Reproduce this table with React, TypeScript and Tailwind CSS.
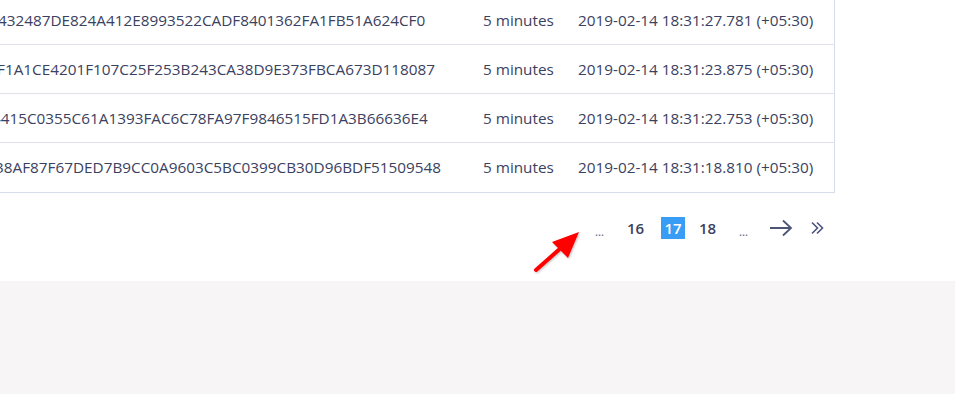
const rows = [
  { hash: "432487DE824A412E8993522CADF8401362FA1FB51A624CF0", shift: "-ml-[2px]", time: "2019-02-14 18:31:27.781 (+05:30)" },
  { hash: "F1A1CE4201F107C25F253B243CA38D9E373FBCA673D118087", shift: "-ml-[3px]", time: "2019-02-14 18:31:23.875 (+05:30)" },
  { hash: "4415C0355C61A1393FAC6C78FA97F9846515FD1A3B66636E4", shift: "-ml-[8px]", time: "2019-02-14 18:31:22.753 (+05:30)" },
  { hash: "38AF87F67DED7B9CC0A9603C5BC0399CB30D96BDF51509548", shift: "-ml-[5px]", time: "2019-02-14 18:31:18.810 (+05:30)" },
];

export default function App() {
  return (
    <div className="relative flex flex-col w-[955px] h-[394px] overflow-hidden bg-white font-['Open_Sans',sans-serif] text-[#3b4161]">
      {/* Table */}
      <div className="h-[281px] shrink-0 bg-white">
        <div className="w-[835px] -mt-[4px] border-r border-b border-[#d6dcea]">
          {rows.map((r, i) => (
            <div
              key={i}
              className={`flex items-center h-[49px] text-[15.3px] ${i < rows.length - 1 ? "border-b border-[#dfe2ea]" : ""}`}
            >
              <div className="w-[483px] overflow-hidden whitespace-nowrap">
                <span className={`block ${r.shift}`}>{r.hash}</span>
              </div>
              <div className="w-[95px] whitespace-nowrap">5 minutes</div>
              <div className="flex-1 whitespace-nowrap">{r.time}</div>
            </div>
          ))}
        </div>

        {/* Pagination */}
        <div className="flex items-center h-[22px] mt-[24px] pl-[595px] text-[15px] font-semibold">
          <span className="w-[32px] text-[11px] text-[#6a7390] leading-none pt-[6px]">...</span>
          <span className="w-[34px]">16</span>
          <span className="w-[24px] h-[22px] flex items-center justify-center bg-[#3a9df5] text-white">17</span>
          <span className="w-[40px] pl-[14px]">18</span>
          <span className="w-[30px] text-[11px] text-[#6a7390] leading-none pt-[6px] pl-[14px]">...</span>
          <svg width="24" height="18" viewBox="0 0 24 18" className="ml-[14px]">
            <path d="M1 9h21M14 1.5l8 7.5-8 7.5" fill="none" stroke="#4d5577" strokeWidth="1.8" />
          </svg>
          <svg width="14" height="16" viewBox="0 0 14 16" className="ml-[17px]">
            <path d="M2 2.5l5.5 5.5L2 13.5M7 2.5l5.5 5.5L7 13.5" fill="none" stroke="#4d5577" strokeWidth="1.6" />
          </svg>
        </div>
      </div>

      {/* Footer band */}
      <div className="flex-1 bg-[#f7f5f6]" />

      {/* Annotation arrow */}
      <svg className="absolute left-[528px] top-[226px]" width="60" height="52" viewBox="0 0 60 52">
        <defs>
          <filter id="sh" x="-20%" y="-20%" width="140%" height="140%">
            <feDropShadow dx="1" dy="1" stdDeviation="1" floodColor="#000" floodOpacity="0.25" />
          </filter>
        </defs>
        <g filter="url(#sh)">
          <path d="M8 44L34 21" stroke="#ff0000" strokeWidth="4" strokeLinecap="round" />
          <path d="M24 16L51 6L40 32Z" fill="#ff0000" />
        </g>
      </svg>
    </div>
  );
}
